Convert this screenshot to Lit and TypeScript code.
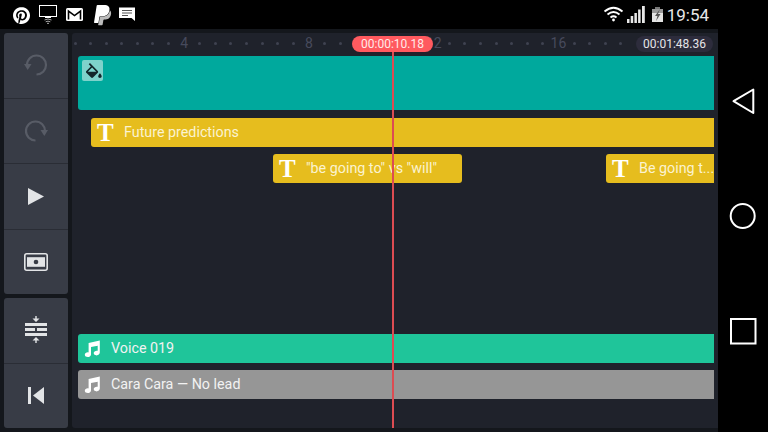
import { LitElement, html, css, svg } from "lit";
import { customElement } from "lit/decorators.js";

// one ruler step is 15.6px, a number sits on every eighth one
const TICKS = Array.from({ length: 36 }, (_, i) => ((i + 1) % 8 === 0 ? String((i + 1) / 2) : ""));

const TRACKS = [
  { gap: 0, height: 54, clips: [{ kind: "fill", left: 6, width: 636, label: "" }] },
  { gap: 8, height: 29, clips: [{ kind: "text", left: 19, width: 623, label: "Future predictions" }] },
  {
    gap: 7,
    height: 29,
    clips: [
      { kind: "text", left: 201, width: 189, label: '"be going to" vs "will"' },
      { kind: "text", left: 534, width: 108, label: "Be going t..." },
    ],
  },
  { gap: 151, height: 29, clips: [{ kind: "voice", left: 6, width: 636, label: "Voice 019" }] },
  { gap: 7, height: 29, clips: [{ kind: "music", left: 6, width: 636, label: "Cara Cara — No lead" }] },
];

const note = html`<svg class="note" viewBox="0 0 16 17" width="16" height="17">
  <path fill="#fff" d="M4.600 3 15.800.4v12.200c0 1.600-1.500 2.800-3.200 2.800-1.600 0-2.900-1-2.900-2.300s1.400-2.400 3.100-2.400c.3 0 .6 0 .9.100V5.800L7 7.100v7.300c0 1.500-1.500 2.600-3.100 2.600C2.200 17 .8 16 .8 14.700s1.400-2.400 3-2.400c.3 0 .5 0 .8.100z" />
</svg>`;

const bucket = html`<svg viewBox="0 0 24 24" width="21" height="21">
  <path fill="#12262b" d="M16.560 8.940 7.620 0 6.210 1.410l2.380 2.380-5.150 5.150c-.59.59-.59 1.540 0 2.120l5.500 5.500c.29.29.68.44 1.060.44s.77-.15 1.060-.44l5.500-5.500c.59-.58.59-1.530 0-2.120zM5.210 10 10 5.210 14.790 10H5.210zM19 11.500s-2 2.170-2 3.500c0 1.100.9 2 2 2s2-.9 2-2c0-1.330-2-3.500-2-3.500z" transform="translate(1.500 3.500)" />
</svg>`;

const statusLeft = svg`
  <path transform="translate(13 7) scale(.71)" fill="#fff" d="M12.017 0C5.396 0 .029 5.367.029 11.987c0 5.079 3.158 9.417 7.618 11.162-.105-.949-.199-2.403.041-3.439.219-.937 1.406-5.957 1.406-5.957s-.359-.72-.359-1.781c0-1.663.967-2.911 2.168-2.911 1.024 0 1.518.769 1.518 1.688 0 1.029-.653 2.567-.992 3.992-.285 1.193.6 2.165 1.775 2.165 2.128 0 3.768-2.245 3.768-5.487 0-2.861-2.063-4.869-5.008-4.869-3.41 0-5.409 2.562-5.409 5.199 0 1.033.394 2.143.889 2.741.099.12.112.225.085.345-.09.375-.293 1.199-.334 1.363-.053.225-.172.271-.401.165-1.495-.69-2.433-2.878-2.433-4.646 0-3.776 2.748-7.252 7.920-7.252 4.158 0 7.392 2.967 7.392 6.923 0 4.135-2.607 7.462-6.233 7.462-1.214 0-2.354-.629-2.758-1.379l-.749 2.848c-.269 1.045-1.004 2.352-1.498 3.146 1.123.345 2.306.535 3.550.535 6.607 0 11.985-5.365 11.985-11.987C23.970 5.390 18.592.026 11.985.026L12.017 0z" />
  <rect x="39.500" y="5.500" width="17" height="11" fill="none" stroke="#fff" />
  <rect x="45" y="17" width="6" height="1" fill="#fff" />
  <path d="M44.500 20q3.500-2 7 0M45.700 21.800q2.300-1.300 4.600 0M47 23.500q1-.6 2 0" fill="none" stroke="#aaa" stroke-width="1" />
  <rect x="66" y="8" width="17" height="13" rx="1.500" fill="#fff" />
  <path d="M68.500 19.500V11l6 4.600 6-4.600v8.500" fill="none" stroke="#000" stroke-width="1.600" />
  <path transform="translate(92.500 5) scale(.84)" fill="#fff" d="M7.076 21.337H2.470a.641.641 0 0 1-.633-.74L4.944.901C5.026.382 5.474 0 5.998 0h7.460c2.570 0 4.578.543 5.690 1.810 1.010 1.150 1.304 2.420 1.012 4.287-.023.143-.047.288-.077.437-.983 5.050-4.349 6.797-8.647 6.797h-2.190c-.524 0-.968.382-1.050.9l-1.120 7.106z" />
  <path transform="translate(92.500 5) scale(.84)" fill="#bbb" d="M21.222 6.917a3.350 3.350 0 0 0-.607-.541c-.013.076-.026.175-.041.254-.93 4.778-4.005 7.201-9.138 7.201h-2.190a.563.563 0 0 0-.556.479l-1.187 7.527h-.506l-.24 1.516a.560.560 0 0 0 .554.647h3.882c.46 0 .85-.334.922-.788.06-.26.76-4.852.816-5.090a.932.932 0 0 1 .923-.788h.58c3.760 0 6.705-1.528 7.565-5.946.36-1.847.174-3.388-.777-4.471z" />
  <path d="M119 7.500h16V21l-3.500-3H119z" fill="#fff" />
  <path d="M122 10.500h10M122 13h10M122 15.500h6" stroke="#555" stroke-width="1" />
`;

@customElement("app-root")
export class AppRoot extends LitElement {
  static styles = css`
    :host {
      display: block;
      width: 768px;
      height: 432px;
      overflow: hidden;
      background: #000;
      font-family: Roboto, "Liberation Sans", sans-serif;
      color: #fff;
    }
    .status {
      height: 29px;
      display: flex;
      justify-content: space-between;
      align-items: center;
    }
    .status-left {
      display: block;
      width: 140px;
      height: 29px;
    }
    .status-right {
      display: flex;
      align-items: center;
      padding-right: 59px;
    }
    .status-icons {
      display: block;
    }
    .clock {
      font-size: 17px;
      line-height: 29px;
      color: #e8e8e8;
      margin-top: 1px;
    }
    .body {
      height: 403px;
      display: flex;
    }
    .app {
      width: 718px;
      flex: none;
      background: #14171c;
      box-sizing: border-box;
      padding: 4px 0 4px 4px;
      display: flex;
      gap: 4px;
    }
    .side {
      width: 64px;
      flex: none;
      display: flex;
      flex-direction: column;
      gap: 4px;
    }
    .group {
      border-radius: 3px;
      overflow: hidden;
      display: flex;
      flex-direction: column;
      background: #383c46;
    }
    .group.top {
      height: 261px;
    }
    .group.bottom {
      height: 130px;
    }
    .btn {
      flex: 1;
      box-sizing: border-box;
      display: flex;
      align-items: center;
      justify-content: center;
      border-top: 1px solid #2a2d35;
    }
    .btn:first-child {
      border-top: none;
    }
    .timeline {
      position: relative;
      width: 646px;
      flex: none;
      background: #1f222b;
      border-radius: 3px 0 0 3px;
    }
    .ruler {
      height: 23px;
      display: flex;
      margin-left: -4.800px;
      overflow: hidden;
    }
    .tick {
      flex: none;
      width: 15.600px;
      height: 20px;
      display: flex;
      align-items: center;
      justify-content: center;
      color: #474a5c;
      font-size: 14px;
    }
    .dot {
      width: 3px;
      height: 3px;
      border-radius: 50%;
      background: #3f4250;
    }
    .track {
      position: relative;
    }
    .clip {
      position: absolute;
      top: 0;
      bottom: 0;
      box-sizing: border-box;
      display: flex;
      align-items: center;
      border-radius: 3px 0 0 3px;
      font-size: 14.300px;
      white-space: nowrap;
      overflow: hidden;
    }
    .label {
      margin-bottom: 2px;
    }
    .fill {
      background: #00a99d;
      align-items: flex-start;
      padding: 4px;
    }
    .swatch {
      width: 21px;
      height: 21px;
      background: #7ed2cb;
      border-radius: 2px;
      display: block;
    }
    .swatch svg {
      display: block;
    }
    .text {
      background: #e6bd1e;
      color: #fbf3d0;
      padding-left: 6px;
      border-radius: 3px;
    }
    .text.open {
      border-radius: 3px 0 0 3px;
    }
    .t {
      font-family: "Liberation Serif", serif;
      font-weight: 700;
      font-size: 25px;
      line-height: 29px;
      color: #fff;
      width: 27px;
      flex: none;
      margin-top: -1px;
    }
    .voice,
    .music {
      padding-left: 6px;
      color: #f2f2f2;
    }
    .voice {
      background: #1fc59a;
    }
    .music {
      background: #969696;
    }
    .note {
      flex: none;
      margin-right: 11px;
      margin-bottom: 1px;
    }
    .playhead {
      position: absolute;
      left: 319.500px;
      top: 18px;
      bottom: 0;
      width: 2px;
      background: #dc4c52;
    }
    .now,
    .total {
      position: absolute;
      top: 3px;
      height: 16px;
      border-radius: 8px;
      font-size: 12px;
      line-height: 16px;
      text-align: center;
    }
    .now {
      left: 280px;
      width: 81px;
      background: #ff5a5f;
      color: #ffe9e9;
    }
    .total {
      left: 564px;
      width: 77px;
      background: #2d2c3c;
      color: #e4e4e8;
    }
    .nav {
      flex: 1;
      display: block;
    }
  `;

  private renderClip(c: { kind: string; left: number; width: number; label: string }) {
    const pos = `left:${c.left}px;width:${c.width}px`;
    if (c.kind === "fill") {
      return html`<div class="clip fill" style=${pos}><span class="swatch">${bucket}</span></div>`;
    }
    if (c.kind === "text") {
      const open = c.left + c.width >= 642;
      return html`<div class="clip text ${open ? "open" : ""}" style=${pos}>
        <span class="t">T</span><span class="label">${c.label}</span>
      </div>`;
    }
    return html`<div class="clip ${c.kind}" style=${pos}>${note}<span class="label">${c.label}</span></div>`;
  }

  render() {
    return html`
      <div class="status">
        <svg class="status-left" viewBox="0 0 140 29">${statusLeft}</svg>
        <div class="status-right">
          <!-- wifi, signal and battery, drawn from x=604 -->
          <svg class="status-icons" width="65" height="29" viewBox="604 0 65 29">
            <path d="M606.500 11.500q9-7.500 18 0M609.500 14.500q6-5 12 0M612.500 17.500q3-2.500 6 0" fill="none" stroke="#fff" stroke-width="1.800" />
            <circle cx="615.500" cy="20" r="1.400" fill="#fff" />
            <g fill="#e8e8e8">
              <rect x="629" y="19" width="2.500" height="4" />
              <rect x="632.700" y="16" width="2.500" height="7" />
              <rect x="636.400" y="13" width="2.500" height="10" />
              <rect x="640.100" y="9.500" width="2.500" height="13.500" />
              <rect x="644" y="6" width="2.800" height="17" />
            </g>
            <path d="M657 7h5v2h3v3h-11V9h3z" fill="#777" />
            <path d="M654 12h11v10h-11z" fill="#e4e4e4" />
            <path d="M654 9h11v4h-11z" fill="#999" />
            <path d="M662 9 657 16h2.500L658 21l4.500-7H660z" fill="#555" />
          </svg>
          <span class="clock">19:54</span>
        </div>
      </div>
      <div class="body">
        <div class="app">
          <div class="side">
            <div class="group top">
              <div class="btn">
                <svg width="24" height="24" viewBox="0 0 24 24">
                  <path d="M3 12A9.500 9.500 0 1 1 12.500 21.500" fill="none" stroke="#585c66" stroke-width="2.200" />
                  <path d="M0 11h7.500L3.700 17z" fill="#585c66" />
                </svg>
              </div>
              <div class="btn">
                <svg width="24" height="24" viewBox="0 0 24 24">
                  <path d="M21 12A9.500 9.500 0 1 0 11.500 21.500" fill="none" stroke="#585c66" stroke-width="2.200" />
                  <path d="M24 11h-7.500l3.800 6z" fill="#585c66" />
                </svg>
              </div>
              <div class="btn">
                <svg width="16" height="17" viewBox="0 0 16 17"><path d="M0 0l16 8.500L0 17z" fill="#e2e4e6" /></svg>
              </div>
              <div class="btn">
                <svg width="24" height="18" viewBox="0 0 24 18">
                  <rect x=".8" y=".8" width="22.400" height="16.400" rx="2" fill="none" stroke="#e2e4e6" stroke-width="1.600" />
                  <rect x="3" y="3" width="18" height="12" fill="#e2e4e6" />
                  <rect x="3" y="3" width="18" height="1.200" fill="#383c46" />
                  <rect x="3" y="13.800" width="18" height="1.200" fill="#383c46" />
                  <circle cx="12" cy="9" r="2.300" fill="#383c46" />
                </svg>
              </div>
            </div>
            <div class="group bottom">
              <div class="btn">
                <svg width="24" height="28" viewBox="0 0 24 28" fill="#e2e4e6">
                  <rect x="1" y="7" width="22" height="3" />
                  <rect x="1" y="12" width="10" height="3" />
                  <rect x="13" y="12" width="10" height="3" />
                  <rect x="1" y="17" width="22" height="3" />
                  <path d="M11.300 0h1.400v2.500H15.500L12 6 8.500 2.500h2.800zM11.300 27h1.400v-2.500H15.500L12 21l-3.500 3.500h2.800z" />
                </svg>
              </div>
              <div class="btn">
                <svg width="16" height="17" viewBox="0 0 16 17" fill="#e2e4e6">
                  <rect x="0" y="0" width="3" height="17" />
                  <path d="M16 0v17L5 8.500z" />
                </svg>
              </div>
            </div>
          </div>
          <div class="timeline">
            <div class="ruler">
              ${TICKS.map((t) => html`<div class="tick">${t ? t : html`<span class="dot"></span>`}</div>`)}
            </div>
            ${TRACKS.map(
              (tr) => html`<div class="track" style="margin-top:${tr.gap}px;height:${tr.height}px">
                ${tr.clips.map((c) => this.renderClip(c))}
              </div>`
            )}
            <div class="playhead"></div>
            <div class="now">00:00:10.18</div>
            <div class="total">00:01:48.36</div>
          </div>
        </div>
        <svg class="nav" viewBox="0 0 50 403">
          <path d="M35.300 60.500v23.500L15.500 72.200z" fill="none" stroke="#fff" stroke-width="2" stroke-linejoin="round" />
          <circle cx="24.700" cy="187" r="12" fill="none" stroke="#fff" stroke-width="2" />
          <rect x="13" y="290" width="24.500" height="24.500" fill="none" stroke="#fff" stroke-width="2" />
        </svg>
      </div>
    `;
  }
}
